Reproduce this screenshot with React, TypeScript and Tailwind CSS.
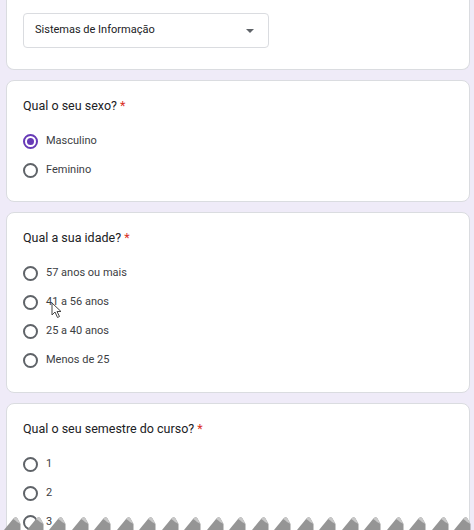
import React from "react";

const font = { fontFamily: "Roboto, 'Liberation Sans', Arial, sans-serif" };

function Radio({ checked }: { checked?: boolean }) {
  return checked ? (
    <span className="flex h-[15px] w-[15px] items-center justify-center rounded-full border-2 border-[#673ab7]">
      <span className="h-[7px] w-[7px] rounded-full bg-[#673ab7]" />
    </span>
  ) : (
    <span className="block h-[15px] w-[15px] rounded-full border-2 border-[#5f6368]" />
  );
}

function Option({ label, checked }: { label: string; checked?: boolean }) {
  return (
    <div className="flex h-[29px] items-center">
      <Radio checked={checked} />
      <span className="ml-[8px] text-[11px] text-[#3c4043]">{label}</span>
    </div>
  );
}

function Question({
  title,
  options,
  checked,
  pb = "pb-[16px]",
}: {
  title: string;
  options: string[];
  checked?: number;
  pb?: string;
}) {
  return (
    <div className={`ml-[6px] w-[464px] rounded-lg border border-[#dadce0] bg-white pl-[16px] pt-[17px] ${pb}`}>
      <div className="text-[12.5px] leading-4 text-[#202124]">
        {title} <span className="text-[#d93025]">*</span>
      </div>
      <div className="mt-[13px]">
        {options.map((o, i) => (
          <Option key={o} label={o} checked={checked === i} />
        ))}
      </div>
    </div>
  );
}

function Strip() {
  const items = Array.from({ length: 21 }, (_, i) => i);
  return (
    <div className="pointer-events-none absolute left-0 top-[515px] h-[15px] w-[474px]">
      {items.map((i) => (
        <svg
          key={i}
          width="17"
          height="15"
          viewBox="0 0 17 15"
          className="absolute top-0"
          style={{ left: 4 + i * 22.5 }}
        >
          <path d="M0 15 L9 4 Q11.5 1 13.5 3.5 L16.5 9 L16.5 15 Z" fill="#959595" />
          <path d="M9 4 Q11.5 1 13.5 3.5 L16.5 9 L13 7 Q11 5 9 4 Z" fill="#c8c8c8" />
        </svg>
      ))}
    </div>
  );
}

export default function App() {
  return (
    <div className="relative h-[530px] w-[474px] overflow-hidden bg-[#efebf8]" style={font}>
      <div className="flex flex-col gap-[10px]">
        <div className="ml-[6px] w-[464px] rounded-b-lg border border-t-0 border-[#dadce0] bg-white pb-[21px] pl-[16px] pt-[13px]">
          <div className="flex h-[35px] w-[246px] items-center justify-between rounded border border-[#dadce0] pl-[11px] pr-[14px]">
            <span className="text-[11px] text-[#202124]">Sistemas de Informação</span>
            <svg width="8" height="4" viewBox="0 0 8 4">
              <path d="M0 0 L8 0 L4 4 Z" fill="#5f6368" />
            </svg>
          </div>
        </div>
        <Question title="Qual o seu sexo?" options={["Masculino", "Feminino"]} checked={0} />
        <Question
          title="Qual a sua idade?"
          options={["57 anos ou mais", "41 a 56 anos", "25 a 40 anos", "Menos de 25"]}
          pb="pb-[17px]"
        />
        <Question title="Qual o seu semestre do curso?" options={["1", "2", "3", "4"]} />
      </div>
      <svg
        className="pointer-events-none absolute left-[51px] top-[302px]"
        width="11"
        height="17"
        viewBox="0 0 11 17"
      >
        <path d="M1 1 L1 13 L4 10 L6.5 15.5 L8.5 14.5 L6 9.5 L10 9.5 Z" fill="white" stroke="#444" strokeWidth="1" strokeLinejoin="round" />
      </svg>
      <Strip />
    </div>
  );
}
